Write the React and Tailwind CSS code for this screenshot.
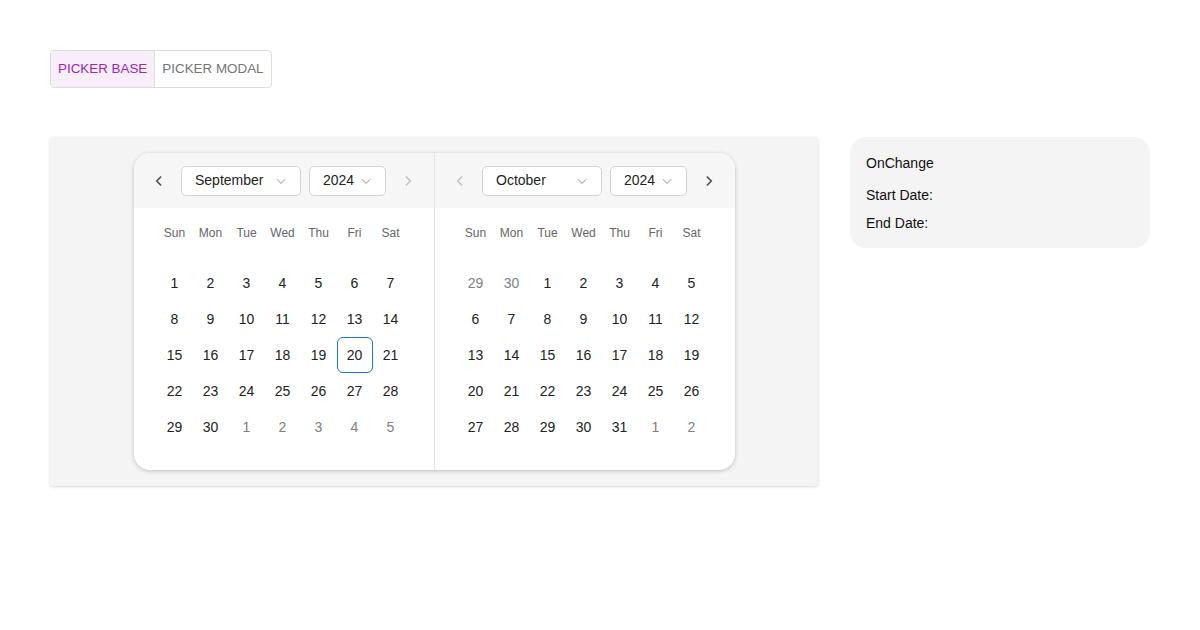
import React from "react";

const Chevron = ({ dir = "right", className = "" }) => (
  <svg width="16" height="16" viewBox="0 0 24 24" className={className} fill="none" stroke="currentColor" strokeWidth="2.6" strokeLinecap="round" strokeLinejoin="round">
    {dir === "right" ? <path d="M9.5 6l6 6-6 6" /> : <path d="M14.5 6l-6 6 6 6" />}
  </svg>
);

const Down = () => (
  <svg width="14" height="14" viewBox="0 0 24 24" fill="none" stroke="#b0b0b0" strokeWidth="1.8" strokeLinecap="round" strokeLinejoin="round">
    <path d="M5 9l7 7 7-7" />
  </svg>
);

const Select = ({ label, w }) => (
  <div className={`${w} h-[30px] flex items-center justify-between pl-[13px] pr-[12px] rounded-[5px] border border-[#d4d4d4] bg-white text-[14px] text-[#222]`}>
    <span>{label}</span>
    <Down />
  </div>
);

const days = ["Sun", "Mon", "Tue", "Wed", "Thu", "Fri", "Sat"];

const Panel = ({ month, prevDisabled, nextDisabled, cells, border }) => (
  <div className={`flex flex-col ${border ? "w-[301px] border-r border-[#e2e2e2]" : "w-[300px]"}`}>
    <div className="h-[55px] bg-[#f6f6f6] flex items-center justify-center">
      <div className={`w-6 flex justify-center ${prevDisabled ? "text-[#c4c4c4]" : "text-[#555]"}`}>
        <Chevron dir="left" />
      </div>
      <div className="ml-[10px] flex gap-2">
        <Select label={month} w="w-[120px]" />
        <Select label="2024" w="w-[77px]" />
      </div>
      <div className={`ml-[10px] w-6 flex justify-center ${nextDisabled ? "text-[#c4c4c4]" : "text-[#555]"}`}>
        <Chevron dir="right" />
      </div>
    </div>
    <div className="px-[23px] pt-[7px] pb-[25px]">
      <div className="grid grid-cols-[repeat(7,36px)] h-9 items-center text-[12px] text-[#666]">
        {days.map((d) => (
          <div key={d} className="text-center">{d}</div>
        ))}
      </div>
      <div className="mt-[14px] grid grid-cols-[repeat(7,36px)] auto-rows-[36px] text-[14px]">
        {cells.map((c, i) => (
          <div
            key={i}
            className={`flex items-center justify-center ${c.out ? "text-[#808080]" : "text-[#222]"} ${c.sel ? "border border-[#1976d2] rounded-[6px]" : ""}`}
          >
            {c.d}
          </div>
        ))}
      </div>
    </div>
  </div>
);

const sepCells = [];
for (let d = 1; d <= 30; d++) sepCells.push({ d, sel: d === 20 });
for (let d = 1; d <= 5; d++) sepCells.push({ d, out: true });

const octCells = [{ d: 29, out: true }, { d: 30, out: true }];
for (let d = 1; d <= 31; d++) octCells.push({ d });
octCells.push({ d: 1, out: true }, { d: 2, out: true });

export default function App() {
  return (
    <div className="w-[1200px] h-[630px] bg-white pt-[50px] pl-[50px] font-['Liberation_Sans',Arial,sans-serif]">
      <div className="inline-flex h-[38px] border border-[#dedede] rounded-[4px] overflow-hidden text-[13.4px]">
        <div className="px-[7px] flex items-center bg-[#f7eefa] text-[#9c27b0] border-r border-[#dedede]">PICKER BASE</div>
        <div className="px-[7px] flex items-center text-[#757575]">PICKER MODAL</div>
      </div>
      <div className="mt-[49px] flex items-start gap-[32px]">
        <div className="w-[768px] h-[349px] bg-[#f4f4f4] rounded-[4px] shadow-[0_1px_3px_rgba(0,0,0,0.16)] flex justify-center pt-4">
          <div className="h-[317px] flex bg-white rounded-[16px] overflow-hidden shadow-[0_1px_4px_rgba(0,0,0,0.22)]">
            <Panel month="September" nextDisabled cells={sepCells} border />
            <Panel month="October" prevDisabled cells={octCells} />
          </div>
        </div>
        <div className="w-[300px] h-[111px] bg-[#f4f4f4] rounded-[16px] px-4 pt-[16px] text-[14px] text-[#111]">
          <div className="leading-[20px]">OnChange</div>
          <div className="mt-[12px] leading-[20px]">Start Date:</div>
          <div className="mt-[8px] leading-[20px]">End Date:</div>
        </div>
      </div>
    </div>
  );
}
